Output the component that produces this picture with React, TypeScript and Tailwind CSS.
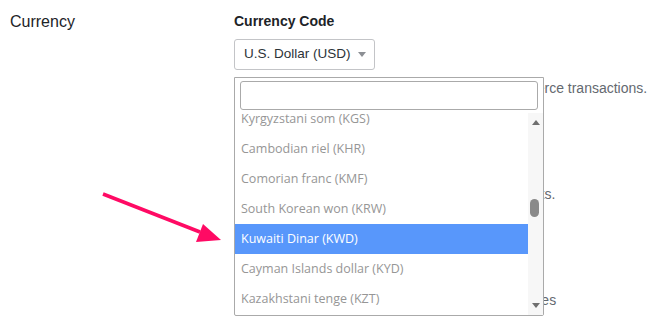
import { useState } from 'react';

const OPTIONS = [
  { label: 'Kyrgyzstani som (KGS)', code: 'KGS' },
  { label: 'Cambodian riel (KHR)', code: 'KHR' },
  { label: 'Comorian franc (KMF)', code: 'KMF' },
  { label: 'South Korean won (KRW)', code: 'KRW' },
  { label: 'Kuwaiti Dinar (KWD)', code: 'KWD' },
  { label: 'Cayman Islands dollar (KYD)', code: 'KYD' },
  { label: 'Kazakhstani tenge (KZT)', code: 'KZT' },
];

function Caret({ className }: { className?: string }) {
  return (
    <svg width="8" height="5" viewBox="0 0 8 5" className={className}>
      <path d="M0 0 L8 0 L4 5 Z" fill="currentColor" />
    </svg>
  );
}

export default function App() {
  const [active] = useState('KWD');

  return (
    <div className="relative w-[653px] h-[335px] bg-white overflow-hidden font-['Liberation_Sans',Arial,sans-serif]">
      <div className="flex pt-[11px]">
        {/* Label */}
        <div className="w-[234px] shrink-0 pl-[10px] text-[16px] leading-[22px] text-[#1d2327]">Currency</div>

        {/* Field */}
        <div className="flex flex-col">
          <div className="text-[14px] leading-[20px] font-bold text-[#1d2327]">Currency Code</div>
          <div className="mt-[8px] w-[141px] h-[31px] border border-[#c3c4c7] rounded-[3px] flex items-center justify-between pl-[9px] pr-[8px] text-[13.5px] text-[#2c3338]">
            <span>U.S. Dollar (USD)</span>
            <Caret className="text-[#8c8f94]" />
          </div>
          <p className="mt-[8px] text-[14px] leading-[20px] text-[#646970] whitespace-nowrap">
            Choose the currency used for all of your e-commerce transactions.
          </p>
          <p className="mt-[86px] text-[14px] leading-[20px] text-[#646970] whitespace-nowrap">
            Prices are displayed in the currency for all products.
          </p>
          <p className="mt-[86px] text-[14px] leading-[20px] text-[#646970] whitespace-nowrap">
            Currency symbol will be displayed next to our prices
          </p>
        </div>
      </div>

      {/* Dropdown overlay */}
      <div className="absolute left-[234px] top-[77px] w-[310px] h-[239px] bg-white border border-[#aaaaaa] rounded-b-[2px] flex flex-col">
        <div className="px-[5px] pt-[3px] pb-[3px]">
          <div className="h-[29px] border border-[#aaaaaa] rounded-[3px]" />
        </div>
        <div className="relative flex-1 overflow-hidden flex font-['Open_Sans','Noto_Sans',sans-serif]">
          <ul className="flex-1 -mt-[9px]">
            {OPTIONS.map((o) => (
              <li
                key={o.code}
                className={
                  o.code === active
                    ? 'h-[30px] flex items-center pl-[6px] text-[12.5px] bg-[#5897fb] text-white'
                    : 'h-[30px] flex items-center pl-[6px] text-[12.5px] text-[#969696]'
                }
              >
                {o.label}
              </li>
            ))}
          </ul>
          {/* Scrollbar */}
          <div className="w-[15px] bg-[#f7f7f7] relative">
            <Caret className="absolute left-[4px] top-[7px] rotate-180 text-[#6f6f6f]" />
            <div className="absolute left-[2px] top-[86px] w-[9px] h-[18px] rounded-full bg-[#8a8a8a]" />
            <Caret className="absolute left-[4px] bottom-[7px] text-[#6f6f6f]" />
          </div>
        </div>
      </div>

      {/* Pink pointer arrow */}
      <svg className="absolute left-0 top-0" width="653" height="335" viewBox="0 0 653 335">
        <line x1="103" y1="194" x2="200" y2="232" stroke="#ff0a64" strokeWidth="3.5" />
        <path d="M221 240 L196 242 L203 224 Z" fill="#ff0a64" />
      </svg>
    </div>
  );
}
